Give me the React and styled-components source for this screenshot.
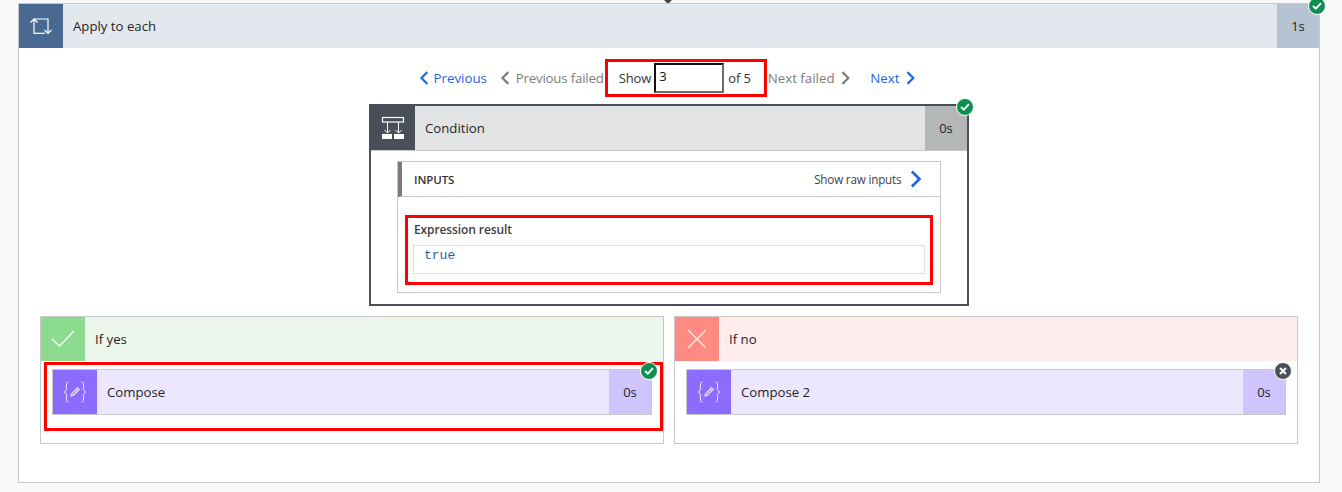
import React from "react";
import styled, { createGlobalStyle } from "styled-components";

const Global = createGlobalStyle`
  html, body { margin:0; padding:0; background:#f8f8f8; }
  body { font-family:"Open Sans","Noto Sans","Liberation Sans",sans-serif; color:#252525; font-size:14px; }
  * { box-sizing:border-box; }
`;

const Page = styled.div`
  width:1342px; height:492px; padding:3px 22px 0 18px; overflow:hidden; position:relative;
`;

const Connector = styled.span`
  position:absolute; left:664px; top:0; width:0; height:0;
  border-left:4px solid transparent; border-right:4px solid transparent; border-top:4px solid #444;
`;

const Scope = styled.section`
  height:480px; background:#fff; border:1px solid #c8c8c8; position:relative;
`;

const tones = {
  loop: { bar:"#e3e8ef", icon:"#486991", time:"#b6c3d3" },
  condition: { bar:"#e2e3e5", icon:"#484f58", time:"#b5b6b8" },
  compose: { bar:"#ece6fe", icon:"#8c6cff", time:"#cfc4fe" },
  yes: { bar:"#ecf6ec", icon:"#8cdb8f", time:"#ecf6ec" },
  no: { bar:"#ffecec", icon:"#ff8a84", time:"#ffecec" },
};

const Bar = styled.header`
  display:flex; align-items:center; height:44px; background:${p => tones[p.$tone].bar};
`;

const IconCell = styled.div`
  width:44px; height:44px; flex:none; display:flex; align-items:center; justify-content:center;
  background:${p => tones[p.$tone].icon};
  svg { display:block; }
`;

const Title = styled.span`
  flex:1; padding-left:10px; font-size:13.2px; line-height:44px;
`;

const Time = styled.span`
  width:42px; height:44px; flex:none; text-align:center; line-height:44px; font-size:13px; letter-spacing:-0.1px;
  background:${p => tones[p.$tone].time};
`;

const Badge = styled.span`
  position:absolute; width:16px; height:16px; border-radius:50%;
  top:${p => p.$top}px; right:${p => p.$right}px;
  background:${p => p.$failed ? "#484f58" : "#0e8f4f"};
  border:1px solid #fff; box-sizing:content-box;
  display:flex; align-items:center; justify-content:center;
  svg { display:block; }
`;

const Pager = styled.nav`
  height:56px; padding:11px 4px 0 0; display:flex; align-items:flex-start; justify-content:center;
`;

const PageLink = styled.span`
  display:flex; align-items:center; gap:${p => p.$gap || 6}px; height:38px; font-size:13.3px;
  margin:${p => p.$margin || 0};
  letter-spacing:${p => p.$tight ? "-0.2px" : "0"};
  color:${p => p.$disabled ? "#7d7d7d" : "#2266e3"};
  white-space:nowrap;
  svg { display:block; flex:none; }
`;

const ShowBox = styled.div`
  display:flex; align-items:center; width:162px; height:38px; border:3px solid #fe0000; padding-left:11px;
  font-size:13px; letter-spacing:-0.1px; color:#333; margin:0 1px; flex:none;
`;

const PageInput = styled.div`
  width:70px; height:30px; margin:0 4px 0 3px; padding-left:3px; flex:none; line-height:22px; font-size:13px; color:#111;
  border:2px solid; border-color:#111 #6d6d6d #6d6d6d #111;
`;

const ConditionCard = styled.article`
  width:600px; height:202px; margin:0 auto; border:2px solid #484f58; position:relative; background:#fff;
`;

const ConditionBody = styled.div`
  padding:10px 26px; height:154px; border-top:1px solid #c8c8c8;
`;

const InputsPanel = styled.div`
  height:132px; border:1px solid #c8c8c8;
`;

const InputsHead = styled.div`
  display:flex; align-items:center; height:35px; border-left:4px solid #7a7a7a; border-bottom:1px solid #c8c8c8;
  padding:0 17px 0 12px; font-size:12px; color:#333;
`;

const InputsLabel = styled.strong`
  flex:1; font-weight:600; font-size:11.5px; letter-spacing:-0.1px;
`;

const RawLink = styled.span`
  display:flex; align-items:center; gap:9px; font-size:11.7px; letter-spacing:-0.2px; color:#444;
  svg { display:block; }
`;

const Field = styled.div`
  margin:18px 7px 0; height:70px; border:3px solid #fe0000; padding:0 5px;
`;

const FieldLabel = styled.div`
  height:27px; line-height:23px; padding-left:1px; font-size:12px; font-weight:600; letter-spacing:-0.1px; color:#404040;
`;

const FieldValue = styled.div`
  height:29px; border:1px dotted #c8c8c8; padding-left:10px; line-height:19px;
  font-family:"Liberation Mono","DejaVu Sans Mono",monospace; font-size:13px; color:#2d5f9e;
`;

const Branches = styled.div`
  display:grid; grid-template-columns:624px 624px; gap:10px; padding:0 21px; margin-top:10px;
`;

const Branch = styled.section`
  height:128px; border:1px solid #c8c8c8; background:#fff;
`;

const StepSlot = styled.div`
  margin:1px 0 0 3px; padding:4px 8px 13px 5px; border:3px solid ${p => p.$marked ? "#fe0000" : "transparent"};
`;

const StepCard = styled.article`
  height:46px; border:1px solid #c8c8c8; position:relative;
`;

const LoopIcon = () => (
  <svg width="24" height="18" viewBox="0 0 24 18" fill="none" stroke="#fff" strokeWidth="1.2">
    <path d="M5 16.500V2.200M1.500 5.500 5 2l3.500 3.500" />
    <path d="M5 2h14v14.500M15.500 13l3.500 3.500 3.500-3.500" />
    <path d="M5 16.300h11" />
  </svg>
);

const ConditionIcon = () => (
  <svg width="24" height="24" viewBox="0 0 24 24" fill="none" stroke="#fff" strokeWidth="1">
    <rect x="1.500" y="1.500" width="21" height="4.500" strokeWidth="1.200" />
    <path d="M6.500 6v11M3.500 14l3 3 3-3M17.500 6v11M14.500 14l3 3 3-3" />
    <rect x="1" y="18" width="10" height="5" fill="#fff" stroke="none" />
    <rect x="13" y="18" width="10" height="5" fill="#fff" stroke="none" />
  </svg>
);

const YesIcon = () => (
  <svg width="24" height="18" viewBox="0 0 24 18" fill="none" stroke="#fff" strokeWidth="1.300">
    <path d="M1 9l7.500 7L23 1" />
  </svg>
);

const NoIcon = () => (
  <svg width="20" height="20" viewBox="0 0 20 20" fill="none" stroke="#ffeede" strokeWidth="1.300">
    <path d="M1 1l18 18M19 1 1 19" />
  </svg>
);

const ComposeIcon = () => (
  <svg width="24" height="22" viewBox="0 0 24 22" fill="none" stroke="#f0ebff" strokeWidth="1">
    <path d="M5.500 1C3 1 3.500 3 3.500 6.500 3.500 9 3 10.500 1 11c2 .5 2.500 2 2.500 4.500C3.500 19 3 21 5.500 21" />
    <path d="M18.500 1C21 1 20.500 3 20.500 6.500c0 2.500.5 4 2.500 4.500-2 .5-2.500 2-2.500 4.500 0 3.500.5 5.500-2 5.500" />
    <path d="M7.800 15.200l.9-3L14.500 6.400l2.100 2.100-5.800 5.800z" fill="rgba(255,255,255,0.4)" />
    <path d="M13.200 7.700l2.100 2.100" strokeWidth="0.800" />
  </svg>
);

const BadgeCheck = () => (
  <svg width="10" height="8" viewBox="0 0 10 8" fill="none" stroke="#fff" strokeWidth="1.800">
    <path d="M1 4l2.800 2.700L9 1.200" />
  </svg>
);

const BadgeCross = () => (
  <svg width="8" height="8" viewBox="0 0 8 8" fill="none" stroke="#fff" strokeWidth="2">
    <path d="M1 1l6 6M7 1 1 7" />
  </svg>
);

const Chevron = ({ dir = "right", size = 14, color = "#2266e3" }) => (
  <svg width={size * 0.7} height={size} viewBox="0 0 10 14" fill="none" stroke={color} strokeWidth="2.200">
    <path d={dir === "left" ? "M8.500 1 2.500 7l6 6" : "M1.500 1l6 6-6 6"} />
  </svg>
);

function Step({ title, failed }) {
  return (
    <StepCard>
      <Bar $tone="compose">
        <IconCell $tone="compose"><ComposeIcon /></IconCell>
        <Title>{title}</Title>
        <Time $tone="compose">0s</Time>
      </Bar>
      <Badge $top={-8} $right={-7} $failed={failed}>{failed ? <BadgeCross /> : <BadgeCheck />}</Badge>
    </StepCard>
  );
}

export default function App() {
  return (
    <Page>
      <Global />
      <Connector />
      <Scope>
        <Bar $tone="loop">
          <IconCell $tone="loop"><LoopIcon /></IconCell>
          <Title>Apply to each</Title>
          <Time $tone="loop">1s</Time>
        </Bar>
        <Badge $top={-7} $right={-7}><BadgeCheck /></Badge>

        <Pager>
          <PageLink $gap={5}><Chevron dir="left" />Previous</PageLink>
          <PageLink $disabled $tight $margin="0 0 0 13px"><Chevron dir="left" color="#7d7d7d" />Previous failed</PageLink>
          <ShowBox>Show<PageInput>3</PageInput>of 5</ShowBox>
          <PageLink $disabled>Next failed<Chevron color="#7d7d7d" /></PageLink>
          <PageLink $margin="0 0 0 20px">Next<Chevron /></PageLink>
        </Pager>

        <ConditionCard>
          <Bar $tone="condition">
            <IconCell $tone="condition"><ConditionIcon /></IconCell>
            <Title>Condition</Title>
            <Time $tone="condition">0s</Time>
          </Bar>
          <Badge $top={-8} $right={-7}><BadgeCheck /></Badge>
          <ConditionBody>
            <InputsPanel>
              <InputsHead>
                <InputsLabel>INPUTS</InputsLabel>
                <RawLink>Show raw inputs<Chevron size={18} /></RawLink>
              </InputsHead>
              <Field>
                <FieldLabel>Expression result</FieldLabel>
                <FieldValue>true</FieldValue>
              </Field>
            </InputsPanel>
          </ConditionBody>
        </ConditionCard>

        <Branches>
          <Branch>
            <Bar $tone="yes">
              <IconCell $tone="yes"><YesIcon /></IconCell>
              <Title>If yes</Title>
            </Bar>
            <StepSlot $marked><Step title="Compose" /></StepSlot>
          </Branch>
          <Branch>
            <Bar $tone="no">
              <IconCell $tone="no"><NoIcon /></IconCell>
              <Title>If no</Title>
            </Bar>
            <StepSlot><Step title="Compose 2" failed /></StepSlot>
          </Branch>
        </Branches>
      </Scope>
    </Page>
  );
}
